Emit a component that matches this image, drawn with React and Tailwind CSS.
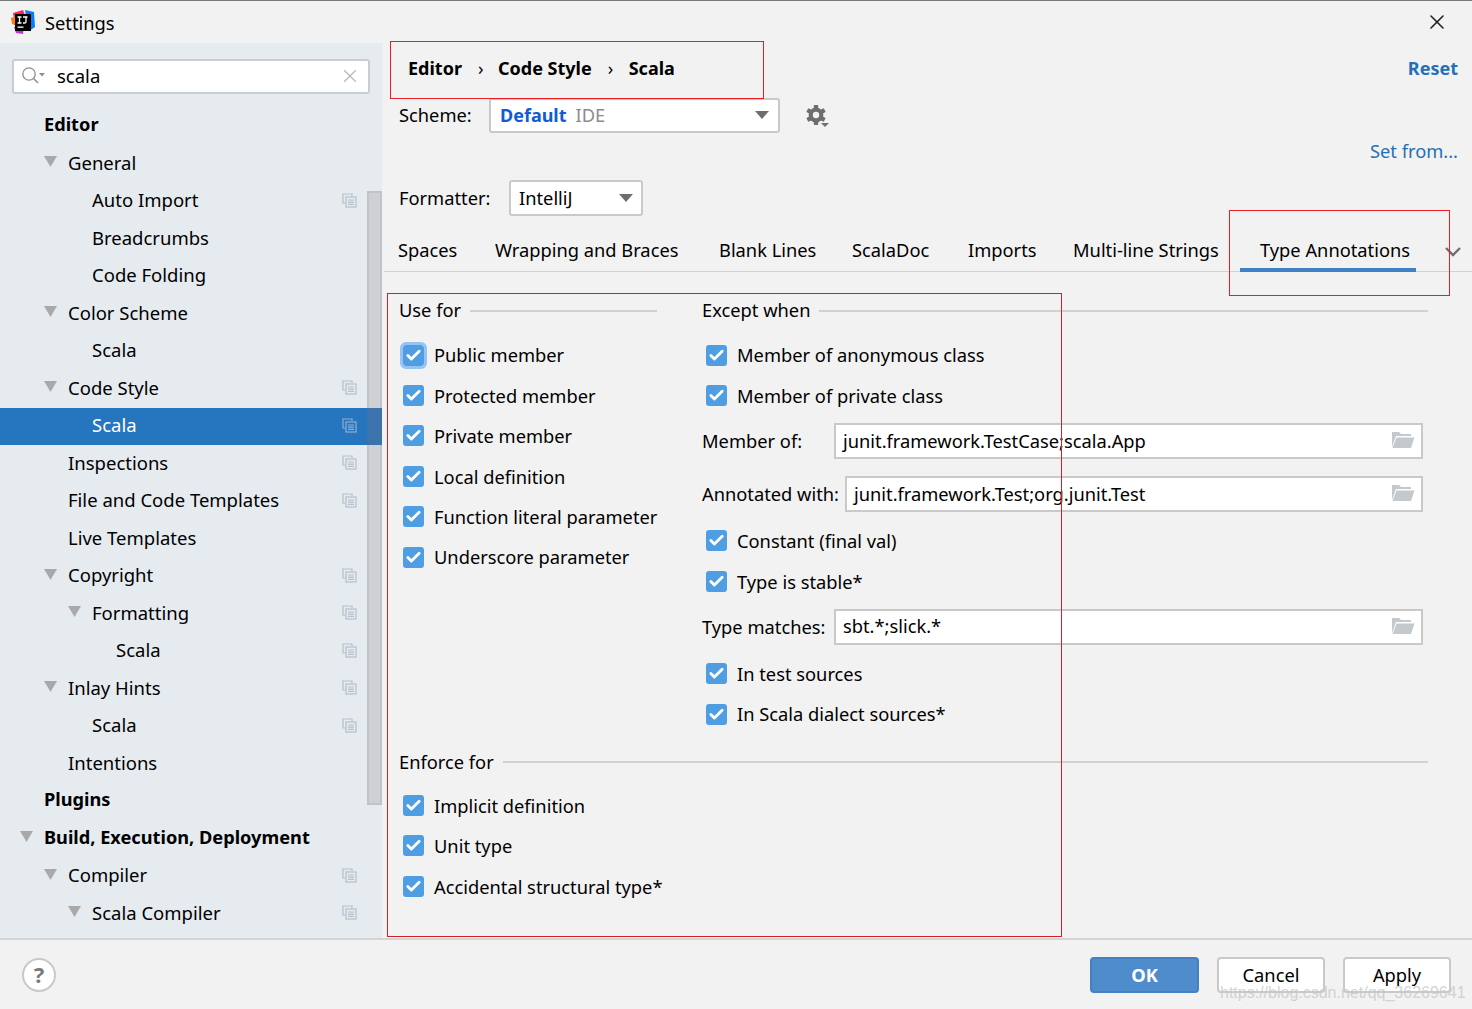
import { Check, X } from 'lucide-react';

const sans = 'font-["Noto_Sans",sans-serif]';

const treeRows = [
  { label: 'Editor', indent: 44, bold: true },
  { label: 'General', indent: 68, open: true },
  { label: 'Auto Import', indent: 92, copy: true },
  { label: 'Breadcrumbs', indent: 92 },
  { label: 'Code Folding', indent: 92 },
  { label: 'Color Scheme', indent: 68, open: true },
  { label: 'Scala', indent: 92 },
  { label: 'Code Style', indent: 68, open: true, copy: true },
  { label: 'Scala', indent: 92, copy: true, selected: true },
  { label: 'Inspections', indent: 68, copy: true },
  { label: 'File and Code Templates', indent: 68, copy: true },
  { label: 'Live Templates', indent: 68 },
  { label: 'Copyright', indent: 68, open: true, copy: true },
  { label: 'Formatting', indent: 92, open: true, copy: true },
  { label: 'Scala', indent: 116, copy: true },
  { label: 'Inlay Hints', indent: 68, open: true, copy: true },
  { label: 'Scala', indent: 92, copy: true },
  { label: 'Intentions', indent: 68 },
  { label: 'Plugins', indent: 44, bold: true },
  { label: 'Build, Execution, Deployment', indent: 44, bold: true, open: true },
  { label: 'Compiler', indent: 68, open: true, copy: true },
  { label: 'Scala Compiler', indent: 92, open: true, copy: true },
];

const tabs = [
  ['Spaces', 'w-[97px]'],
  ['Wrapping and Braces', 'w-[224px]'],
  ['Blank Lines', 'w-[133px]'],
  ['ScalaDoc', 'w-[116px]'],
  ['Imports', 'w-[105px]'],
  ['Multi-line Strings', 'w-[167px]'],
];

const Logo = () => (
  <svg width="26" height="26" viewBox="0 0 26 26">
    <path d="M3 4 L13 1 L15 6 L5 14 Z" fill="#fe2857" />
    <path d="M15 1 L24 3 L25 18 L19 22 Z" fill="#087cfa" />
    <path d="M1 9 L6 7 L7 17 L2 15 Z" fill="#fe7a1d" />
    <path d="M4 18 L14 16 L13 25 L6 24 Z" fill="#c92be0" />
    <rect x="5" y="5" width="16" height="17" fill="#000" />
    <path d="M7.5 8 h4 M9.5 8 v6 M7.5 14 h4 M13 8 h4.5 M16 8 v5 q0 1 -1.5 1 h-1.5" stroke="#fff" strokeWidth="1.3" fill="none" />
    <rect x="7.5" y="17.5" width="6" height="1.3" fill="#fff" />
  </svg>
);

const SearchIcon = () => (
  <svg width="26" height="20" viewBox="0 0 26 20" fill="none">
    <circle cx="8" cy="8" r="6.2" stroke="#8b9095" strokeWidth="1.3" />
    <path d="M12.5 12.5 L17 17" stroke="#8b9095" strokeWidth="1.6" />
    <path d="M18 7 h6 l-3 3.5 Z" fill="#8b9095" />
  </svg>
);

const CopyIcon = ({ selected }) => (
  <svg width="15" height="15" viewBox="0 0 15 15" fill="none" className="shrink-0">
    <g stroke={selected ? '#8fb0d0' : '#b4bfc9'} strokeWidth="1.2">
      <path d="M10 3 V1 H1 V10 H3.5" />
      <rect x="4" y="4" width="10" height="10" fill={selected ? '#2675bf' : '#e6ebf0'} />
      <path d="M6 7 H12 M6 9.2 H12 M6 11.4 H12" />
    </g>
  </svg>
);

const Caret = () => (
  <svg width="14" height="12" viewBox="0 0 14 12" className="shrink-0">
    <path d="M0 0 H13 L6.5 11 Z" fill="#a9a9a9" />
  </svg>
);

const DropArrow = () => (
  <svg width="14" height="8" viewBox="0 0 14 8" className="shrink-0">
    <path d="M0 0 H14 L7 8 Z" fill="#6e6e6e" />
  </svg>
);

const Gear = () => (
  <svg width="26" height="28" viewBox="0 0 26 28">
    <g transform="translate(11 11)" fill="#6e6e6e">
      <rect x="-2.2" y="-10" width="4.4" height="20" rx="0.8" />
      <rect x="-2.2" y="-10" width="4.4" height="20" rx="0.8" transform="rotate(60)" />
      <rect x="-2.2" y="-10" width="4.4" height="20" rx="0.8" transform="rotate(120)" />
      <circle r="7.4" />
      <circle r="3.2" fill="#f2f2f2" />
    </g>
    <path d="M16 19 h8 l-4 4 Z" fill="#6e6e6e" />
  </svg>
);

const Folder = () => (
  <svg width="24" height="18" viewBox="0 0 24 18" className="shrink-0">
    <path d="M1 16 V1 H8 L10 3 H20 V5 H5 L1 16 Z" fill="#c3c9cc" />
    <path d="M5.5 6.5 H23.5 L20 17 H1.5 Z" fill="#c3c9cc" />
  </svg>
);

const Checkbox = ({ label, focused }) => (
  <div className="flex h-[40.4px] items-center">
    <div className="flex w-[35px] shrink-0 items-center">
      <span
        className={`ml-[4px] flex h-[21px] w-[21px] items-center justify-center rounded-[3px] bg-[#4f9ee3] ${
          focused ? 'outline-[3px] outline-[#97c3f3]' : ''
        }`}
      >
        <Check size={17} strokeWidth={4} color="#fff" />
      </span>
    </div>
    <span>{label}</span>
  </div>
);

const PathField = ({ label, value, labelWidth }) => (
  <div className="flex items-center">
    <span className={`${labelWidth} whitespace-nowrap`}>{label}</span>
    <div className="flex h-[36px] flex-1 items-center justify-between border-2 border-[#c9c9c9] bg-white pb-[1px] pl-[7px] pr-[6px]">
      <span>{value}</span>
      <Folder />
    </div>
  </div>
);

const GroupTitle = ({ title, className }) => (
  <div className={`flex items-center gap-[9px] ${className}`}>
    <span className="pb-[2px]">{title}</span>
    <div className="h-[2px] flex-1 bg-[#d1d1d1]" />
  </div>
);

const TreeRow = ({ row }) => (
  <div
    className={`relative flex h-[37.5px] items-center pb-[2.5px] pr-[25px] ${row.selected ? 'z-10 bg-[#2675bf] text-white' : ''}`}
    style={{ paddingLeft: row.indent }}
  >
    {row.open && (
      <span className="absolute top-[11px]" style={{ left: row.indent - 24 }}>
        <Caret />
      </span>
    )}
    <span className={`flex-1 ${row.bold ? 'text-[18.2px] font-bold' : ''}`}>{row.label}</span>
    {row.copy && <CopyIcon selected={row.selected} />}
    {row.selected && <div className="absolute right-0 top-0 h-full w-[15px] bg-[#3d73ac]" />}
  </div>
);

const Sidebar = () => (
  <aside className="relative h-[895px] w-[382px] shrink-0 overflow-hidden bg-[#e6ebf0] text-[18.5px]">
    <div className="px-[12px] pt-[16px]">
      <div className="flex h-[35px] w-[358px] items-center rounded-[3px] border-2 border-[#c9cdd1] bg-white pb-[1px] pl-[7px] pr-[7px]">
        <SearchIcon />
        <span className="ml-[10px] flex-1">scala</span>
        <X size={22} strokeWidth={1.2} color="#b4b4b4" />
      </div>
    </div>
    <div className="pt-[13.5px]">
      {treeRows.map((row, i) => (
        <TreeRow key={i} row={row} />
      ))}
    </div>
    <div className="absolute left-[367px] top-[148px] h-[614px] w-[15px] border-2 border-[#c0c4c8] bg-[#cdd1d6]" />
  </aside>
);

const Breadcrumb = () => (
  <div className="flex h-[55px] items-center justify-between pb-[5px] pl-[26px] pr-[14px] text-[18px] font-bold">
    <div className="flex items-center">
      <span>Editor</span>
      <span className="w-[36px] pl-[16px] text-[18px] font-normal">›</span>
      <span>Code Style</span>
      <span className="w-[37px] pl-[16px] text-[18px] font-normal">›</span>
      <span>Scala</span>
    </div>
    <span className="text-[#2470b3]">Reset</span>
  </div>
);

const SettingsHeader = () => (
  <div className="pl-[17px] pr-[14px]">
    <div className="flex h-[34px] items-center">
      <span className="w-[90px]">Scheme:</span>
      <div className="flex h-[35px] w-[291px] items-center justify-between rounded-[3px] border-2 border-[#c9c9c9] bg-white pl-[9px] pr-[9px]">
        <span>
          <b className="text-[18px] text-[#0f5bd9]">Default</b>
          <span className="ml-[9px] text-[#8c8c8c]">IDE</span>
        </span>
        <DropArrow />
      </div>
      <span className="ml-[25px] mt-[6px]">
        <Gear />
      </span>
    </div>
    <div className="mt-[5px] flex h-[28px] items-center justify-end text-[#2470b3]">Set from...</div>
    <div className="mt-[15px] flex h-[36px] items-center">
      <span className="w-[110px]">Formatter:</span>
      <div className="flex h-[36px] w-[134px] items-center justify-between rounded-[3px] border-2 border-[#c9c9c9] bg-white pl-[8px] pr-[8px]">
        <span>IntelliJ</span>
        <DropArrow />
      </div>
    </div>
  </div>
);

const TabBar = () => (
  <div className="ml-[2px] mt-[17px] flex h-[39px] items-stretch border-b border-[#d1d1d1] pl-[14px]">
    {tabs.map(([t, w]) => (
      <div key={t} className={`${w} flex h-[38px] shrink-0 items-center whitespace-nowrap pb-[5px]`}>
        {t}
      </div>
    ))}
    <div className="flex h-[39px] w-[176px] items-center whitespace-nowrap border-b-4 border-[#3f80c6] pb-[2px] pl-[20px]">
      Type Annotations
    </div>
    <div className="ml-[29px] flex items-center">
      <svg width="16" height="10" viewBox="0 0 16 10" fill="none">
        <path d="M1 1 L8 8 L15 1" stroke="#6e6e6e" strokeWidth="2.4" />
      </svg>
    </div>
  </div>
);

const TypeAnnotationsPanel = () => (
  <div className="ml-[17px] mr-[44px] mt-[25px]">
    <div className="flex">
      <div className="w-[303px]">
        <GroupTitle title="Use for" className="h-[28px] w-[258px]" />
        <div className="mt-[10px]">
          <Checkbox label="Public member" focused />
          <Checkbox label="Protected member" />
          <Checkbox label="Private member" />
          <Checkbox label="Local definition" />
          <Checkbox label="Function literal parameter" />
          <Checkbox label="Underscore parameter" />
        </div>
      </div>
      <div className="flex-1">
        <GroupTitle title="Except when" className="h-[28px]" />
        <div className="mt-[10px]">
          <Checkbox label="Member of anonymous class" />
          <Checkbox label="Member of private class" />
        </div>
        <div className="mr-[5px] mt-[7px] flex flex-col gap-[17px]">
          <PathField label="Member of:" labelWidth="w-[132px]" value="junit.framework.TestCase;scala.App" />
          <PathField label="Annotated with:" labelWidth="w-[143px]" value="junit.framework.Test;org.junit.Test" />
        </div>
        <div className="mt-[9px]">
          <Checkbox label="Constant (final val)" />
          <Checkbox label="Type is stable*" />
        </div>
        <div className="mr-[5px] mt-[7px]">
          <PathField label="Type matches:" labelWidth="w-[132px]" value="sbt.*;slick.*" />
        </div>
        <div className="mt-[9px]">
          <Checkbox label="In test sources" />
          <Checkbox label="In Scala dialect sources*" />
        </div>
      </div>
    </div>
    <GroupTitle title="Enforce for" className="mt-[14px] h-[28px]" />
    <div className="mt-[9px]">
      <Checkbox label="Implicit definition" />
      <Checkbox label="Unit type" />
      <Checkbox label="Accidental structural type*" />
    </div>
  </div>
);

const Footer = () => (
  <footer className="flex h-[71px] items-center justify-between border-t-2 border-[#d4d4d4] pl-[22px] pr-[21px]">
    <div className="flex h-[34px] w-[34px] items-center justify-center rounded-full border-2 border-[#c9c9c9] bg-white text-[22px] font-bold text-[#7a7a7a]">
      ?
    </div>
    <div className="flex gap-[18px]">
      <button className="h-[36px] w-[109px] rounded-[4px] border-2 border-[#4580c0] bg-[#4f8ccb] pt-[1px] font-bold text-white">OK</button>
      <button className="h-[36px] w-[108px] rounded-[4px] border-2 border-[#c9c9c9] bg-white pt-[1px]">Cancel</button>
      <button className="h-[36px] w-[108px] rounded-[4px] border-2 border-[#c9c9c9] bg-white pt-[1px]">Apply</button>
    </div>
  </footer>
);

const App = () => (
  <div className={`${sans} relative h-[1009px] w-[1472px] overflow-hidden border-t border-[#7a7a7a] bg-[#f2f2f2] text-[18.3px] text-black`}>
    <header className="flex h-[42px] items-center justify-between pl-[10px] pr-[23px]">
      <div className="flex items-center gap-[9px]">
        <Logo />
        <span className="pt-[1px]">Settings</span>
      </div>
      <X size={24} strokeWidth={1.6} color="#222" />
    </header>
    <div className="flex">
      <Sidebar />
      <main className="min-w-0 flex-1">
        <Breadcrumb />
        <SettingsHeader />
        <TabBar />
        <TypeAnnotationsPanel />
      </main>
    </div>
    <Footer />

    {/* annotation boxes drawn on top of the screenshot */}
    <div className="absolute left-[390px] top-[40px] h-[58px] w-[374px] border border-[#ed1c24]" />
    <div className="absolute left-[1229px] top-[209px] h-[86px] w-[221px] border border-[#ed1c24]" />
    <div className="absolute left-[387px] top-[292px] h-[644px] w-[675px] border border-[#d0202a]" />
    <span className="absolute left-[1220px] top-[980px] font-['Liberation_Sans',sans-serif] text-[16px] text-[#c8c8c8]/80">
      https://blog.csdn.net/qq_36269641
    </span>
  </div>
);

export default App;
